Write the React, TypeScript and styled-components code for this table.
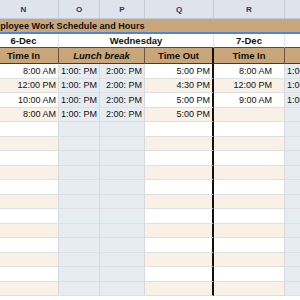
import styled, { createGlobalStyle } from "styled-components";

const GlobalStyle = createGlobalStyle`
  html, body {
    margin: 0;
    padding: 0;
    background: #ffffff;
  }
  body {
    font-family: "Liberation Sans", Arial, sans-serif;
    color: #111;
  }
`;

const COLS = "70px 41px 45px 69px 71px 41px";

const Sheet = styled.div`
  width: 300px;
  height: 300px;
  overflow: hidden;
  background: #fff;
`;

const Grid = styled.div`
  margin-left: -11px;
  width: 337px;
  display: flex;
  flex-direction: column;
`;

const Row = styled.div<{ $h: number }>`
  display: grid;
  grid-template-columns: ${COLS};
  height: ${(p) => p.$h}px;
  flex-shrink: 0;
`;

const ColHead = styled.div`
  background: #dfe4ec;
  border-right: 1px solid #c5ccd6;
  border-bottom: 1px solid #c5ccd6;
  display: flex;
  align-items: center;
  justify-content: center;
  font-size: 8px;
  font-weight: 700;
  color: #203a66;
`;

const TitleBar = styled.div`
  grid-column: 1 / -1;
  background: #c9a67c;
  display: flex;
  align-items: center;
  font-size: 9.1px;
  font-weight: 700;
  white-space: nowrap;
  overflow: hidden;
`;

const TitleText = styled.span`
  margin-left: -3px;
`;

const BlueLine = styled.div`
  height: 2px;
  background: #4b87d6;
  flex-shrink: 0;
`;

const DateCell = styled.div<{ $span?: number }>`
  grid-column: span ${(p) => p.$span ?? 1};
  background: #fff;
  border-right: 1px solid #e4e4e4;
  border-bottom: 1px solid #5b4935;
  display: flex;
  align-items: center;
  justify-content: center;
  font-size: 9.5px;
  font-weight: 700;
  white-space: nowrap;
`;

const HeadCell = styled.div<{ $span?: number; $italic?: boolean; $thick?: boolean }>`
  grid-column: span ${(p) => p.$span ?? 1};
  background: #c9a57a;
  border-right: ${(p) => (p.$thick ? "2px solid #111" : "1px solid #6b5640")};
  border-bottom: 1.5px solid #4a3a29;
  display: flex;
  align-items: center;
  justify-content: center;
  font-size: 9.5px;
  font-weight: 700;
  font-style: ${(p) => (p.$italic ? "italic" : "normal")};
  white-space: nowrap;
`;

const DataCell = styled.div<{ $bg: string; $thick?: boolean; $pad?: number }>`
  background: ${(p) => p.$bg};
  border-right: ${(p) => (p.$thick ? "2px solid #111" : "1px solid #d6d9dd")};
  border-bottom: 1px solid #dfe0e2;
  display: flex;
  align-items: center;
  justify-content: flex-end;
  padding-right: ${(p) => p.$pad ?? 2}px;
  font-size: 9px;
  white-space: nowrap;
  overflow: hidden;
`;

const WHITE = "#ffffff";
const CREAM = "#f9f0e6";
const STEEL = "#e7ecf1";

type Entry = { inA: string; lunchOut: string; lunchIn: string; out: string; inB: string; next: string };

const entries: Entry[] = [
  { inA: "8:00 AM", lunchOut: "1:00: PM", lunchIn: "2:00: PM", out: "5:00 PM", inB: "8:00 AM", next: "1:00: PM" },
  { inA: "12:00 PM", lunchOut: "1:00: PM", lunchIn: "2:00: PM", out: "4:30 PM", inB: "12:00 PM", next: "1:00: PM" },
  { inA: "10:00 AM", lunchOut: "1:00: PM", lunchIn: "2:00: PM", out: "5:00 PM", inB: "9:00 AM", next: "1:00: PM" },
  { inA: "8:00 AM", lunchOut: "1:00: PM", lunchIn: "2:00: PM", out: "5:00 PM", inB: "", next: "" },
];

const blank: Entry = { inA: "", lunchOut: "", lunchIn: "", out: "", inB: "", next: "" };

const rows: Entry[] = [...entries, ...Array.from({ length: 12 }, () => blank)];

// the S letter sits past the right edge of the view, so its header stays empty
const columns = ["N", "O", "P", "Q", "R", ""];

export default function App() {
  return (
    <>
      <GlobalStyle />
      <Sheet>
        <Grid>
          <Row $h={19}>
            {columns.map((c, i) => (
              <ColHead key={i}>{c}</ColHead>
            ))}
          </Row>
          <Row $h={13}>
            <TitleBar>
              <TitleText>Employee Work Schedule and Hours</TitleText>
            </TitleBar>
          </Row>
          <BlueLine />
          <Row $h={14}>
            <DateCell>6-Dec</DateCell>
            <DateCell $span={3}>Wednesday</DateCell>
            <DateCell>7-Dec</DateCell>
            <DateCell />
          </Row>
          <Row $h={16}>
            <HeadCell>Time In</HeadCell>
            <HeadCell $span={2} $italic>
              Lunch break
            </HeadCell>
            <HeadCell $thick>Time Out</HeadCell>
            <HeadCell>Time In</HeadCell>
            <HeadCell />
          </Row>
          {rows.map((r, i) => {
            const bg = i % 2 === 0 ? WHITE : CREAM;
            return (
              <Row $h={14.5} key={i}>
                <DataCell $bg={bg}>{r.inA}</DataCell>
                <DataCell $bg={STEEL}>{r.lunchOut}</DataCell>
                <DataCell $bg={STEEL}>{r.lunchIn}</DataCell>
                <DataCell $bg={bg} $thick>
                  {r.out}
                </DataCell>
                <DataCell $bg={bg} $pad={12}>
                  {r.inB}
                </DataCell>
                <DataCell $bg={STEEL}>{r.next}</DataCell>
              </Row>
            );
          })}
        </Grid>
      </Sheet>
    </>
  );
}
